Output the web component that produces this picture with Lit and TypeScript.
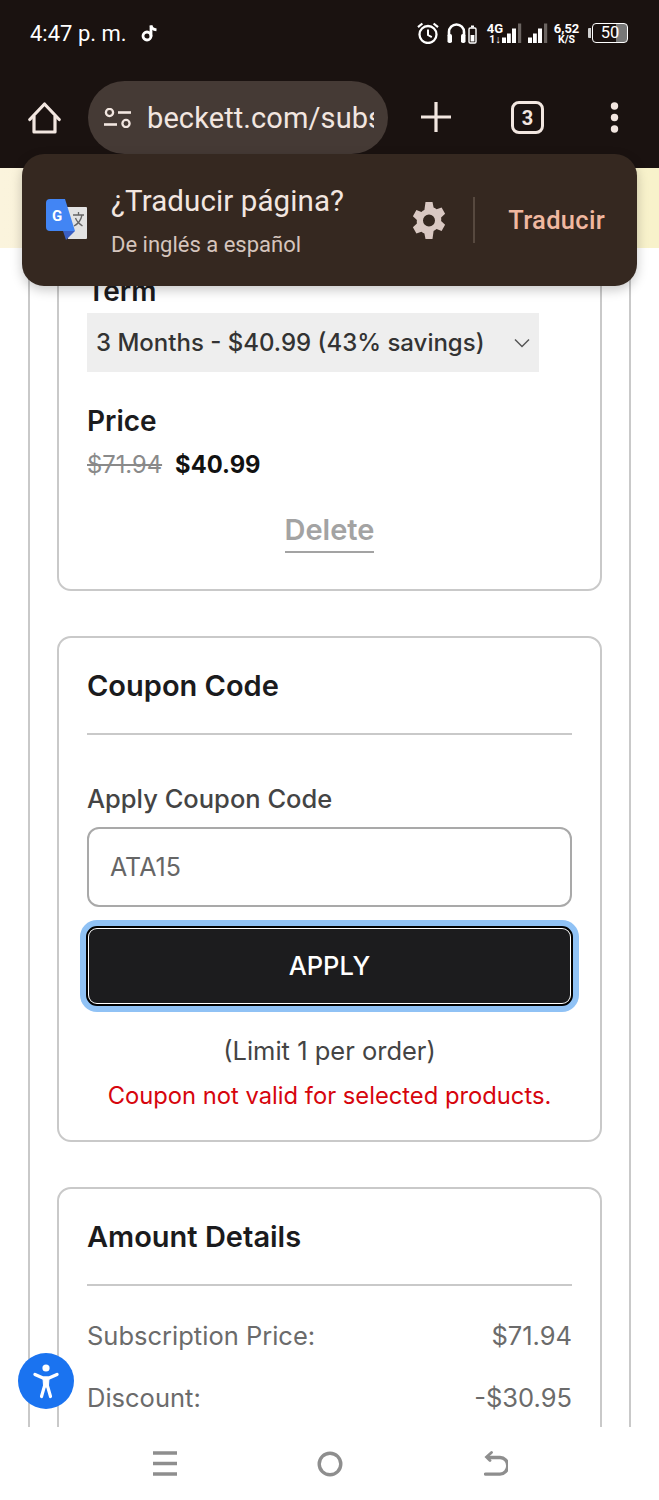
import { LitElement, html, css, svg } from 'lit';
import { customElement } from 'lit/decorators.js';

const icon = (w: number, h: number, body: unknown, cls = '') => html`
  <svg class=${cls} width=${w} height=${h} viewBox="0 0 ${w} ${h}" fill="none">${body}</svg>
`;

const ICONS = {
  tiktok: svg`<path d="M10 1.500v11" stroke="#fff" stroke-width="2.800"/><circle cx="6" cy="12" r="4" stroke="#fff" stroke-width="2.800"/><path d="M10 1.500c.5 2.800 2.200 4 5.500 4.300" stroke="#fff" stroke-width="2.800"/>`,
  alarm: svg`<circle cx="11" cy="12.500" r="8.500" stroke="#fff" stroke-width="2.300"/><path d="M11 7.500v5.500l3.800 2.200" stroke="#fff" stroke-width="2"/><path d="M1 5.200 5.400 1.500M21 5.200 16.600 1.500" stroke="#fff" stroke-width="2.200"/>`,
  headphones: svg`<path d="M2 14v-4a7.500 7.500 0 0 1 15 0v4" stroke="#fff" stroke-width="2.600"/><rect x="0.500" y="12" width="4.500" height="9" rx="1.800" fill="#fff"/><rect x="14" y="12" width="4.500" height="9" rx="1.800" fill="#fff"/><rect x="22" y="6" width="7" height="15" rx="1.200" stroke="#fff" stroke-width="1.400"/><rect x="24" y="3.500" width="3" height="2" fill="#fff"/><rect x="23.600" y="13" width="3.800" height="6.500" fill="#fff"/>`,
  signal: svg`<rect x="0" y="14.500" width="4" height="5.500" fill="#fff"/><rect x="5" y="10.500" width="3.800" height="9.500" fill="#fff"/><rect x="10" y="5.500" width="4" height="14.500" fill="#fff"/><rect x="16" y="0.500" width="3.200" height="19.500" fill="#6b6461"/>`,
  home: svg`<path d="M1.800 17.500 16.500 2l14.700 15.500" stroke="#f2e6e0" stroke-width="3.200" stroke-linejoin="round" stroke-linecap="round"/><path d="M6 14v16h21V14" stroke="#f2e6e0" stroke-width="3.200" stroke-linejoin="round"/>`,
  tune: svg`<circle cx="5.500" cy="4.500" r="3.600" stroke="#f2e6e0" stroke-width="2.300"/><path d="M14 4.500h13" stroke="#f2e6e0" stroke-width="2.600"/><path d="M0 16.500h13" stroke="#f2e6e0" stroke-width="2.600"/><circle cx="22" cy="15.500" r="3.600" stroke="#f2e6e0" stroke-width="2.300"/>`,
  plus: svg`<path d="M15 0v30M0 15h30" stroke="#f2e6e0" stroke-width="3.200"/>`,
  dots: svg`<circle cx="4.500" cy="4" r="3.700" fill="#f2e6e0"/><circle cx="4.500" cy="15.500" r="3.700" fill="#f2e6e0"/><circle cx="4.500" cy="27" r="3.700" fill="#f2e6e0"/>`,
  translate: svg`<path d="M15 8h25a1 1 0 0 1 1 1v30a1 1 0 0 1-1 1H22z" fill="#e3e3e3"/><path d="M0 4a4 4 0 0 1 4-4h15l10 32H4a4 4 0 0 1-4-4z" fill="#4285f4"/><path d="M17 32h12l-9 9z" fill="#3a5fc4"/><text x="6" y="21.500" font-family="Roboto, sans-serif" font-weight="700" font-size="15" fill="#fff">G</text><path d="M27 16h11M32.500 13v3M36 16c-1 5-4 9-8 11M29.500 19c1 3 4 6 7 8" stroke="#666" stroke-width="1.300"/>`,
  gear: svg`<path fill="#d9c8c2" fill-rule="evenodd" d="M14.500 0h7l1.100 5.500c1.100.4 2.100 1 3 1.800l5-1.800 3.500 6.200-4 3.700a11.500 11.500 0 0 1 0 3.600l4 3.700-3.500 6.200-5-1.800c-.9.8-1.900 1.400-3 1.800L21.500 37h-7l-1.100-5.500c-1.100-.4-2.100-1-3-1.800l-5 1.800-3.500-6.200 4-3.700a11.500 11.500 0 0 1 0-3.600l-4-3.700 3.500-6.200 5 1.800c.9-.8 1.900-1.400 3-1.800zM18 12.500a6 6 0 1 0 0 12 6 6 0 0 0 0-12z"/>`,
  person: svg`<circle cx="28" cy="15" r="3.600" fill="#fff"/><path d="M17 21.500 25 25h6l8-3.500" stroke="#fff" stroke-width="3.400" stroke-linecap="round" stroke-linejoin="round"/><path d="M25 25h6l-.6 9h-4.800z" fill="#fff" stroke="#fff" stroke-width="1"/><path d="M26.500 33 23.500 43.500M29.500 33l3 10.500" stroke="#fff" stroke-width="3.200" stroke-linecap="round"/>`,
  menu: svg`<path d="M0 2h24M0 12.500h24M0 23h24" stroke="#8e8e8e" stroke-width="3.400"/>`,
  circle: svg`<circle cx="13" cy="13" r="10.800" stroke="#8e8e8e" stroke-width="3.400"/>`,
  back: svg`<path d="M5 6.500h11a7.800 8.300 0 0 1 0 16.600H1.500" stroke="#8e8e8e" stroke-width="3.400" stroke-linecap="round"/><path d="M7.500 1.500 2.500 6l3.500 3.500" stroke="#8e8e8e" stroke-width="2.800" stroke-linecap="round"/>`,
};

@customElement('app-root')
export class AppRoot extends LitElement {
  static styles = css`
    :host {
      display: block;
      width: 659px;
      height: 1500px;
      position: relative;
      overflow: hidden;
      background: #fff;
      font-family: Inter, "Noto Sans", sans-serif;
      color: #1b1b1d;
    }
    * { box-sizing: border-box; }

    /* system + browser chrome */
    .chrome {
      height: 168px;
      background: #1a1210;
      color: #fff;
      font-family: Roboto, sans-serif;
    }
    .status {
      height: 66px;
      padding: 0 31px 0 30px;
      display: flex;
      align-items: center;
      justify-content: space-between;
    }
    .status-left { display: flex; align-items: center; gap: 14px; font-size: 22px; }
    .status-right { display: flex; align-items: center; }
    .hp { margin-left: 8px; }
    .net {
      display: flex;
      flex-direction: column;
      align-items: center;
      font-weight: 700;
      font-size: 13px;
      line-height: 13px;
      white-space: nowrap;
    }
    .net small { font-size: 10.500px; line-height: 9px; }
    .net-a { width: 16px; margin-left: 10px; }
    .sig-a { margin-left: -1px; }
    .sig-b { margin-left: 6px; }
    .net-b { width: 23px; margin-left: 7px; }
    .battery-tip { width: 3px; height: 10px; background: #cfcfcf; margin-left: 10px; margin-right: 1px; border-radius: 1px 0 0 1px; }
    .battery {
      width: 36px;
      height: 20px;
      border: 1.600px solid #fff;
      border-radius: 4px;
      font-size: 16.500px;
      line-height: 17px;
      text-align: center;
      background: linear-gradient(90deg, transparent 68%, #777 68%);
    }
    .toolbar {
      height: 73px;
      margin-top: 15px;
      padding-left: 28px;
      display: flex;
      align-items: center;
    }
    .pill {
      width: 300px;
      height: 73px;
      margin-left: 27px;
      padding: 0 14px 0 16px;
      border-radius: 37px;
      background: #453a35;
      display: flex;
      align-items: center;
      gap: 16px;
      color: #f2e6e0;
      font-size: 29px;
      letter-spacing: 0.1px;
    }
    .url { overflow: hidden; white-space: nowrap; flex: 1; }
    .plus { margin: 0 0 1px 33px; }
    .tabs {
      width: 33px;
      height: 33px;
      margin-left: 60px;
      border: 3px solid #f2e6e0;
      border-radius: 8px;
      color: #f2e6e0;
      font-size: 20px;
      font-weight: 700;
      display: flex;
      align-items: center;
      justify-content: center;
    }
    .dots { margin-left: 66px; }

    .banner {
      height: 80px;
      background: linear-gradient(90deg, #fbf4dd, #f9f1cf 50%, #f8f2cb);
    }

    /* page content */
    .viewport { height: 1179px; overflow: hidden; }
    .page {
      margin: 0 28px;
      padding: 7px 27px 0;
      border-left: 2px solid #c9c9c9;
      border-right: 2px solid #c9c9c9;
      display: flex;
      flex-direction: column;
      gap: 45px;
    }
    .card {
      border: 2px solid #c9c9c9;
      border-radius: 14px;
      padding: 0 28px;
    }
    .plan { height: 336px; padding-top: 17px; }
    .h-field { font-size: 28px; font-weight: 600; line-height: 34px; }
    .select {
      width: 452px;
      height: 59px;
      margin-top: 5px;
      padding: 0 9px;
      background: #eeeeee;
      display: flex;
      align-items: center;
      justify-content: space-between;
      font-size: 24px;
      font-weight: 500;
      color: #333;
    }
    .price-title { margin-top: 32px; }
    .price { margin-top: 8px; display: flex; gap: 13px; font-size: 23.750px; line-height: 38px; }
    .old { color: #8a8a8a; text-decoration: line-through; }
    .new { font-weight: 700; color: #111; }
    .delete-row { margin-top: 25px; display: flex; justify-content: center; }
    .delete {
      color: #a3a3a3;
      font-size: 29px;
      font-weight: 600;
      line-height: 42px;
      border-bottom: 2px solid #a3a3a3;
    }

    .coupon { height: 506px; }
    .details { height: 400px; }
    .title {
      height: 97px;
      padding-top: 28px;
      border-bottom: 2px solid #c9c9c9;
      font-size: 29px;
      font-weight: 600;
      line-height: 40px;
    }
    .label { margin-top: 46px; font-size: 25.500px; font-weight: 500; line-height: 36px; color: #444; }
    .input {
      height: 80px;
      margin-top: 10px;
      padding: 0 21px;
      border: 2px solid #a9a9a9;
      border-radius: 12px;
      display: flex;
      align-items: center;
      font-size: 25px;
      color: #666;
    }
    .apply {
      height: 78px;
      margin-top: 20px;
      border: 2px solid #fff;
      outline: 2px solid #000;
      outline-offset: -1px;
      border-radius: 10px;
      box-shadow: 0 0 0 7px #90c2f5;
      background: #1c1c1e;
      color: #fff;
      font-size: 25.500px;
      font-weight: 500;
      display: flex;
      align-items: center;
      justify-content: center;
      padding-bottom: 2px;
    }
    .limit { margin-top: 26px; text-align: center; font-size: 25.500px; line-height: 40px; color: #444; }
    .error { margin-top: 5px; text-align: center; font-size: 23.750px; line-height: 40px; color: #d6050d; }
    .row {
      display: flex;
      justify-content: space-between;
      font-size: 25.500px;
      line-height: 40px;
      color: #6b6b6b;
      margin-bottom: 22px;
    }
    .rows { padding-top: 30px; }

    /* overlays */
    .translate {
      position: absolute;
      left: 22px;
      top: 154px;
      width: 615px;
      height: 132px;
      padding: 0 32px 0 24px;
      border-radius: 22px;
      background: #352820;
      box-shadow: 0 4px 12px rgba(0, 0, 0, 0.22);
      display: flex;
      align-items: center;
      font-family: Roboto, sans-serif;
    }
    .t-text { margin-left: 24px; flex: 1; }
    .t-title { font-size: 29.500px; line-height: 36px; color: #f2e6e0; letter-spacing: 0.1px; }
    .t-sub { font-size: 22px; line-height: 26px; margin-top: 13px; color: #d5c5bd; }
    .t-div { width: 2px; height: 46px; margin: 0 33px 0 26px; background: #57493f; }
    .t-btn { font-size: 25.500px; font-weight: 500; color: #f0b8a0; letter-spacing: 0.3px; }
    .a11y {
      position: absolute;
      left: 18px;
      top: 1353px;
      width: 56px;
      height: 56px;
      border-radius: 50%;
      background: #1a73f0;
    }

    .nav {
      height: 73px;
      padding: 24px 0 0 1px;
      display: grid;
      grid-template-columns: 24px 26px 24px;
      column-gap: 140px;
      justify-content: center;
      align-items: start;
    }
    .back { margin-left: 1px; }
  `;

  render() {
    return html`
      <div class="chrome">
        <div class="status">
          <div class="status-left">
            <span>4:47 p. m.</span>
            ${icon(16, 18, ICONS.tiktok)}
          </div>
          <div class="status-right">
            ${icon(22, 22, ICONS.alarm)}
            ${icon(30, 22, ICONS.headphones, 'hp')}
            <div class="net net-a"><span>4G</span><small>1↓</small></div>
            ${icon(20, 20, ICONS.signal, 'sig-a')}
            ${icon(20, 20, ICONS.signal, 'sig-b')}
            <div class="net net-b"><span>6,52</span><small>K/S</small></div>
            <span class="battery-tip"></span>
            <div class="battery">50</div>
          </div>
        </div>
        <div class="toolbar">
          ${icon(33, 32, ICONS.home)}
          <div class="pill">
            ${icon(27, 20, ICONS.tune)}
            <span class="url">beckett.com/subscriptions</span>
          </div>
          ${icon(30, 30, ICONS.plus, 'plus')}
          <div class="tabs">3</div>
          ${icon(9, 31, ICONS.dots, 'dots')}
        </div>
      </div>
      <div class="banner"></div>
      <div class="viewport">
        <div class="page">
          <section class="card plan">
            <div class="h-field">Term</div>
            <div class="select">
              <span>3 Months - $40.99 (43% savings)</span>
              <svg width="16" height="10" viewBox="0 0 16 10" fill="none"><path d="M1 1.500 8 8.500l7-7" stroke="#555" stroke-width="1.500"/></svg>
            </div>
            <div class="h-field price-title">Price</div>
            <div class="price"><span class="old">$71.94</span><span class="new">$40.99</span></div>
            <div class="delete-row"><span class="delete">Delete</span></div>
          </section>
          <section class="card coupon">
            <div class="title">Coupon Code</div>
            <div class="label">Apply Coupon Code</div>
            <div class="input">ATA15</div>
            <div class="apply">APPLY</div>
            <div class="limit">(Limit 1 per order)</div>
            <div class="error">Coupon not valid for selected products.</div>
          </section>
          <section class="card details">
            <div class="title">Amount Details</div>
            <div class="rows">
              <div class="row"><span>Subscription Price:</span><span>$71.94</span></div>
              <div class="row"><span>Discount:</span><span>-$30.95</span></div>
            </div>
          </section>
        </div>
      </div>
      <div class="nav">
        ${icon(24, 25, ICONS.menu)}
        ${icon(26, 26, ICONS.circle)}
        ${icon(24, 26, ICONS.back, 'back')}
      </div>

      <div class="translate">
        ${icon(41, 42, ICONS.translate)}
        <div class="t-text">
          <div class="t-title">¿Traducir página?</div>
          <div class="t-sub">De inglés a español</div>
        </div>
        ${icon(36, 37, ICONS.gear)}
        <div class="t-div"></div>
        <div class="t-btn">Traducir</div>
      </div>
      <div class="a11y">${icon(56, 56, ICONS.person)}</div>
    `;
  }
}

declare global {
  interface HTMLElementTagNameMap {
    'app-root': AppRoot;
  }
}
